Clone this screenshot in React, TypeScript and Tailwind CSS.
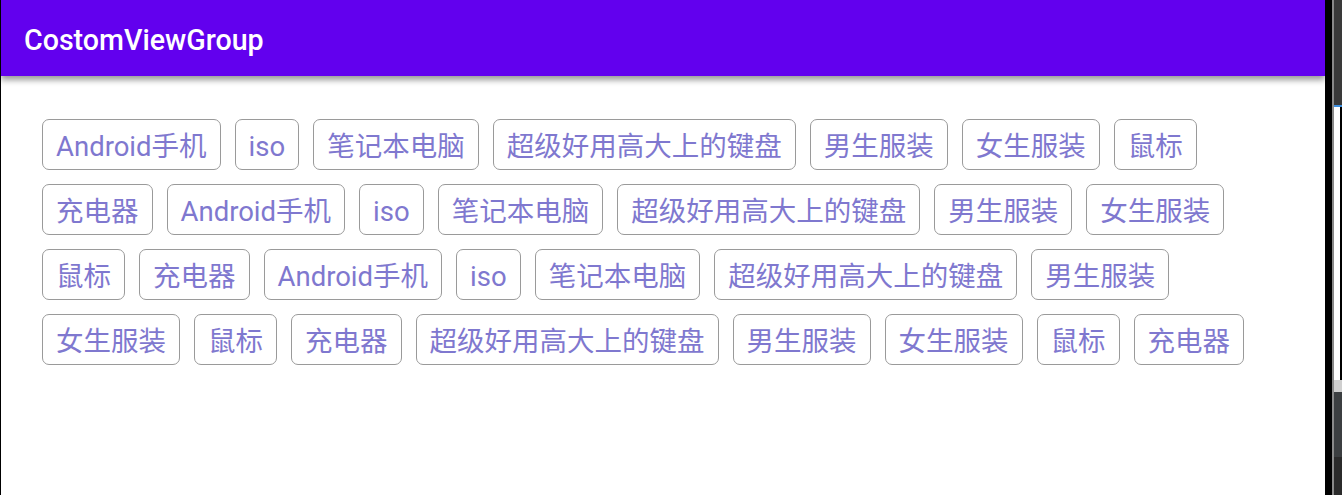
const tags: string[] = [
  "Android手机", "iso", "笔记本电脑", "超级好用高大上的键盘", "男生服装", "女生服装", "鼠标",
  "充电器", "Android手机", "iso", "笔记本电脑", "超级好用高大上的键盘", "男生服装", "女生服装",
  "鼠标", "充电器", "Android手机", "iso", "笔记本电脑", "超级好用高大上的键盘", "男生服装",
  "女生服装", "鼠标", "充电器", "超级好用高大上的键盘", "男生服装", "女生服装", "鼠标", "充电器",
];

function Tag({ label }: { label: string }) {
  return (
    <div className="flex h-[51px] items-center rounded-[7px] border border-[#9a9a9a] px-[13px] pt-[4px] text-[27.5px] leading-none text-[#7f78cf]">
      {label}
    </div>
  );
}

function SideStrip() {
  // editor window edge that peeks in on the right of the capture
  return (
    <div className="flex h-full w-[17px] shrink-0">
      <div className="h-full w-[7px] bg-black" />
      <div className="h-full w-[2px] bg-[#8a8a8a]" />
      <div className="flex h-full w-[8px] flex-col">
        <div className="h-[105px] bg-[#3a3a3a]" />
        <div className="h-[2px] bg-[#3d8fe0]" />
        <div className="h-[273px] border-r-2 border-black bg-white" />
        <div className="h-[12px] bg-[#cfcfcf]" />
        <div className="h-[65px] bg-[#3c3f41]" />
        <div className="flex-1 bg-[#2b2b2b]" />
      </div>
    </div>
  );
}

export default function App() {
  return (
    <div
      className="flex h-[495px] w-[1342px] overflow-hidden bg-white"
      style={{ fontFamily: 'Roboto, "Noto Sans CJK SC", sans-serif' }}
    >
      <div className="flex h-full w-[1325px] flex-col border-l border-black">
        <header className="relative flex h-[76px] shrink-0 items-center bg-[#6200ee] pl-[23px] pt-[5px] shadow-[0_4px_6px_rgba(0,0,0,0.4)]">
          <h1 className="text-[28.6px] font-medium text-white">CostomViewGroup</h1>
        </header>
        <main className="flex flex-wrap content-start gap-x-[14px] gap-y-[14px] pl-[41px] pr-[41px] pt-[43px]">
          {tags.map((t, i) => (
            <Tag key={i} label={t} />
          ))}
        </main>
      </div>
      <SideStrip />
    </div>
  );
}
